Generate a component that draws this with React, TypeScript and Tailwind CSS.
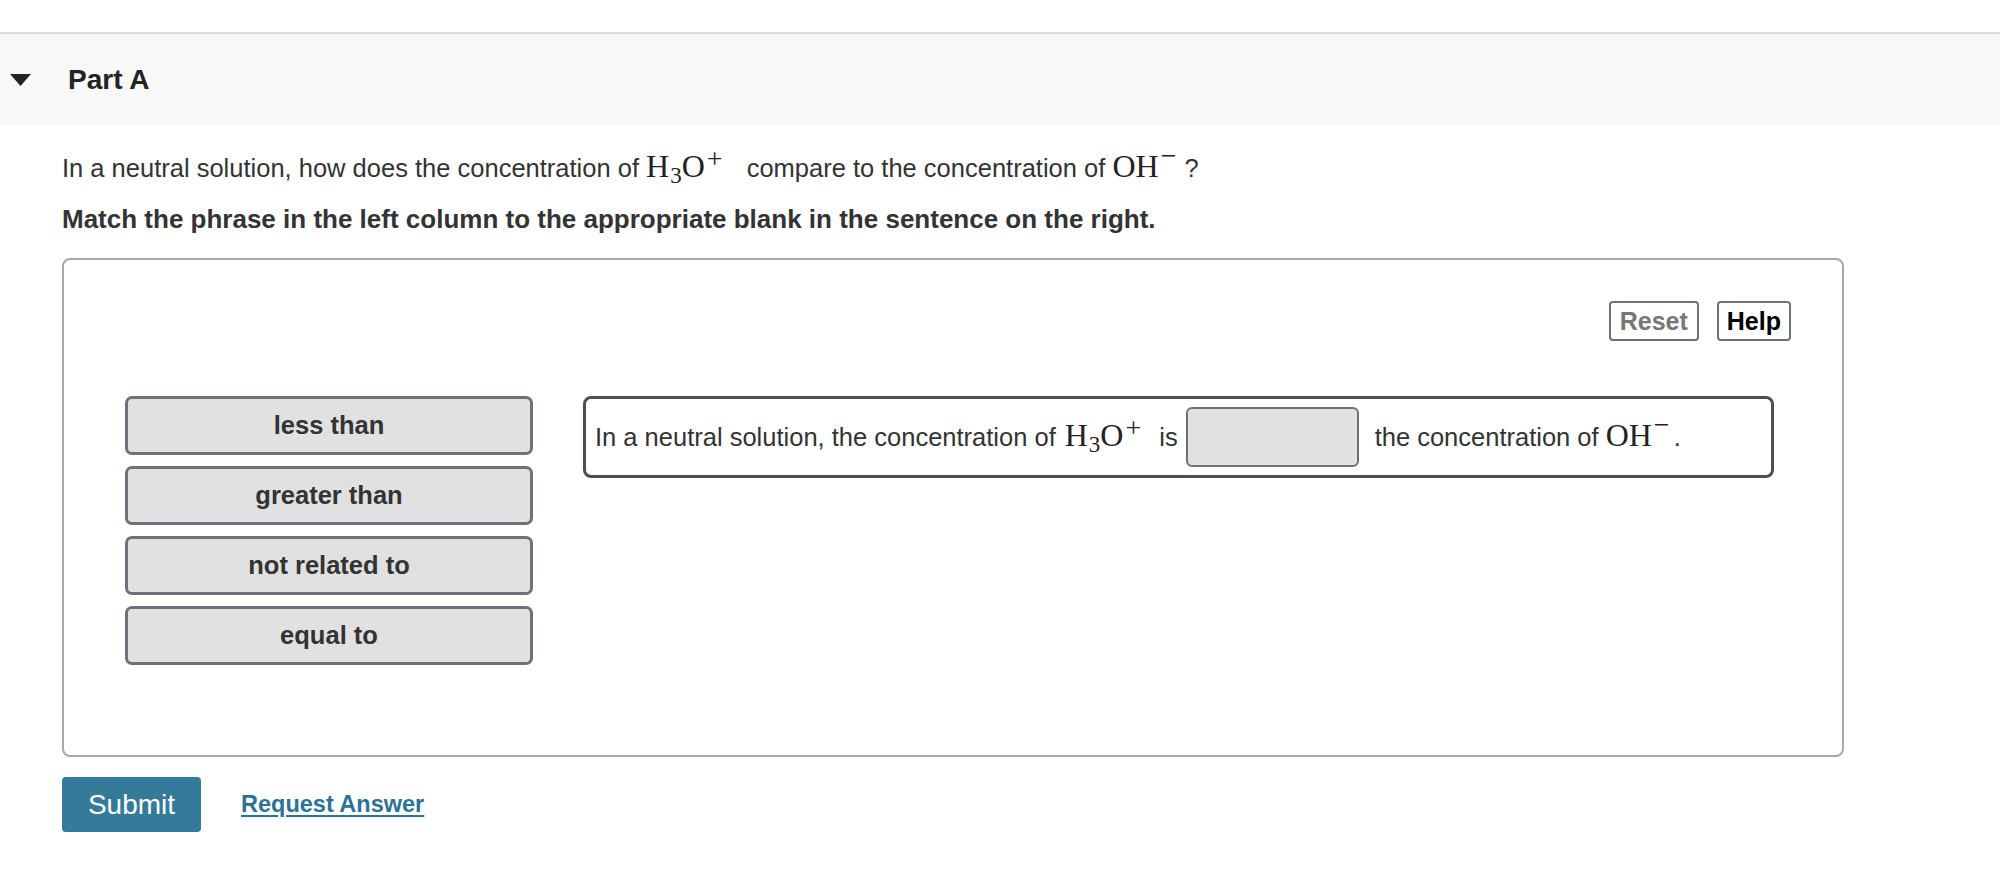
import React from 'react';

const Chem: React.FC<{ base: string; sub?: string; sup?: string; tail?: string }> = ({ base, sub, sup, tail }) => (
  <span className="font-['Liberation_Serif','Times_New_Roman',serif] text-[32px] leading-none text-[#222]">
    {base}
    {sub && <sub className="ml-[1px] text-[23px]">{sub}</sub>}
    {tail}
    {sup === '+' && <sup className="top-[-0.32em] ml-[2px] text-[28px]">{sup}</sup>}
    {sup === '−' && <sup className="top-[-0.42em] ml-[2px] text-[28px]">{sup}</sup>}
  </span>
);

const options = ['less than', 'greater than', 'not related to', 'equal to'];

export default function App() {
  return (
    <div className="min-h-screen bg-white font-['Liberation_Sans',Arial,sans-serif] text-[#333]">
      <div className="h-[32px]" />

      {/* Part header */}
      <div className="flex h-[93px] items-center border-t-2 border-[#dcdcdc] bg-[#f8f8f8]">
        <svg width="21" height="12" viewBox="0 0 21 12" className="ml-[10px]">
          <path d="M0 0 L21 0 L10.5 12 Z" fill="#222" />
        </svg>
        <h2 className="ml-[37px] text-[28px] font-bold text-[#222]">Part A</h2>
      </div>

      <div className="pl-[62px]">
        <p className="mt-[25px] text-[25.5px] leading-[36px]">
          In a neutral solution, how does the concentration of{' '}
          <Chem base="H" sub="3" tail="O" sup="+" /> <span className="ml-[17px]">compare to the concentration of</span>{' '}
          <Chem base="OH" sup="−" />
          <span className="ml-[8px]">?</span>
        </p>
        <p className="mt-[15px] text-[26px] font-bold leading-[36px]">
          Match the phrase in the left column to the appropriate blank in the sentence on the right.
        </p>

        {/* Matching panel */}
        <div className="mt-[21px] w-[1782px] rounded-[8px] border-2 border-[#a8a8a8] pb-[90px] pl-[61px] pr-[51px] pt-[41px]">
          <div className="flex justify-end gap-[18px]">
            <button className="h-[40px] rounded-[4px] border-2 border-[#6c7378] bg-white px-[9px] text-[25px] font-bold text-[#777]">
              Reset
            </button>
            <button className="h-[40px] rounded-[4px] border-2 border-[#6c7378] bg-white px-[8px] text-[25px] font-bold text-black">
              Help
            </button>
          </div>

          <div className="mt-[55px] flex items-start gap-[50px] pr-[17px]">
            <div className="flex w-[408px] flex-col gap-[11px]">
              {options.map((o) => (
                <div
                  key={o}
                  className="flex h-[59px] items-center justify-center rounded-[7px] border-[3px] border-[#6e717c] bg-[#e1e1e1] text-[25.5px] font-bold text-[#333]"
                >
                  {o}
                </div>
              ))}
            </div>

            <div className="flex flex-1 items-center rounded-[8px] border-[3px] border-[#4b5055] py-[8px] pl-[9px] pr-[9px] text-[25.5px]">
              <span>In a neutral solution, the concentration of</span>
              <span className="ml-[9px]">
                <Chem base="H" sub="3" tail="O" sup="+" />
              </span>
              <span className="ml-[18px]">is</span>
              <div className="ml-[8px] mr-[16px] h-[60px] w-[173px] rounded-[6px] border-2 border-[#6e717c] bg-[#e1e1e1]" />
              <span>the concentration of</span>
              <span className="ml-[7px]">
                <Chem base="OH" sup="−" />
              </span>
              <span className="ml-[4px]">.</span>
            </div>
          </div>
        </div>

        {/* Actions */}
        <div className="mt-[20px] flex items-center gap-[40px]">
          <button className="h-[55px] w-[139px] rounded-[4px] bg-[#347b9a] text-[28px] text-white">Submit</button>
          <a href="#" className="text-[23.5px] font-bold text-[#2c7196] underline underline-offset-[3px]">
            Request Answer
          </a>
        </div>
      </div>
    </div>
  );
}
